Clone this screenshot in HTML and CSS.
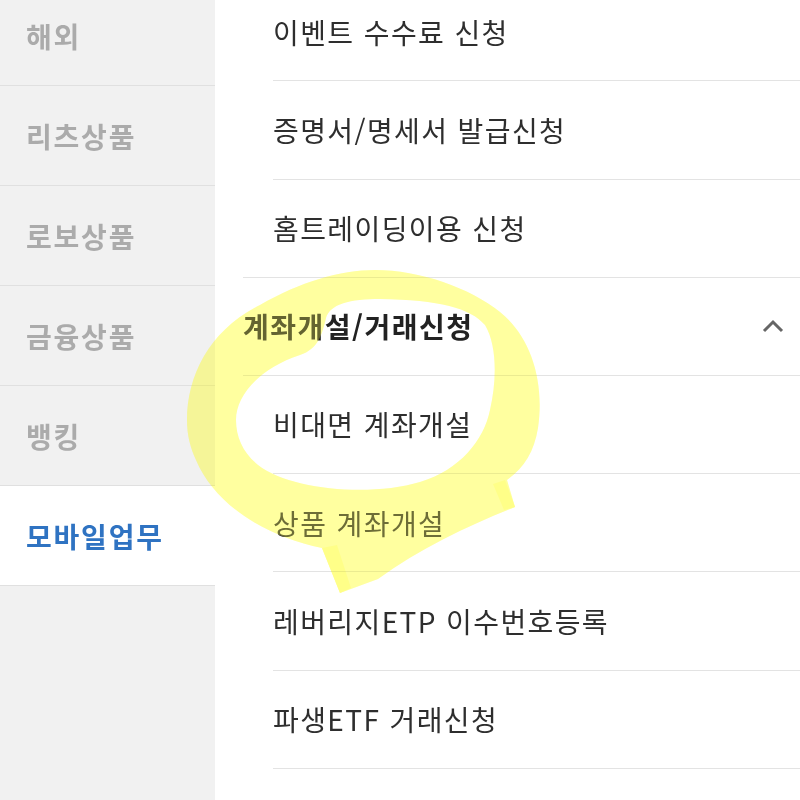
FILE: index.html
```html
<!DOCTYPE html>
<html lang="ko">
<head>
<meta charset="utf-8">
<title>모바일업무</title>
<link rel="stylesheet" href="styles.css">
</head>
<body>
<div class="page">
  <nav class="sidebar">
    <div class="side-item">해외</div>
    <div class="side-item">리츠상품</div>
    <div class="side-item">로보상품</div>
    <div class="side-item">금융상품</div>
    <div class="side-item">뱅킹</div>
    <div class="side-item active">모바일업무</div>
  </nav>
  <main class="content">
    <div class="group">
      <div class="row">이벤트 수수료 신청</div>
      <div class="row">증명서/명세서 발급신청</div>
      <div class="row">홈트레이딩이용 신청</div>
    </div>
    <div class="group open">
      <div class="head">
        <span>계좌개설/거래신청</span>
        <svg class="chev" width="24" height="16" viewBox="0 0 24 16"><polyline points="3,13 12,4 21,13" fill="none" stroke="#666" stroke-width="3"/></svg>
      </div>
      <div class="row">비대면 계좌개설</div>
      <div class="row">상품 계좌개설</div>
      <div class="row">레버리지ETP 이수번호등록</div>
      <div class="row">파생ETF 거래신청</div>
    </div>
  </main>
  <svg class="marker multiply" width="800" height="800" viewBox="0 0 800 800">
    <path class="ink-base" fill-rule="evenodd" d="M187 420 C187 375 210 330 260 305 C300 282 340 270 375 270 C420 270 470 288 500 312 C530 336 545 380 538 428 C534 452 524 468 507 480 L515 507 C470 525 420 548 378 579 L340 593 L322 548 C265 536 215 505 196 460 C190 447 187 435 187 420 Z M236 420 C236 395 260 368 300 355 C318 349 322 335 326 318 C330 304 350 299 380 299 C440 300 470 308 485 325 C497 345 497 380 490 410 C484 440 460 470 420 482 C370 497 290 490 258 465 C243 453 236 437 236 420 Z"/>
    <path class="ink-cap" d="M493 484 L505 480 L515 507 L504 510 Z M322 548 L337 545 L351 588 L340 593 Z"/>
  </svg>
  <svg class="marker tint" width="800" height="800" viewBox="0 0 800 800">
    <path class="ink-tint" fill-rule="evenodd" d="M187 420 C187 375 210 330 260 305 C300 282 340 270 375 270 C420 270 470 288 500 312 C530 336 545 380 538 428 C534 452 524 468 507 480 L515 507 C470 525 420 548 378 579 L340 593 L322 548 C265 536 215 505 196 460 C190 447 187 435 187 420 Z M236 420 C236 395 260 368 300 355 C318 349 322 335 326 318 C330 304 350 299 380 299 C440 300 470 308 485 325 C497 345 497 380 490 410 C484 440 460 470 420 482 C370 497 290 490 258 465 C243 453 236 437 236 420 Z"/>
  </svg>
</div>
</body>
</html>
```
FILE: styles.css
```css
html, body {
  margin: 0;
  padding: 0;
  background: #fff;
}
body {
  width: 800px;
  height: 800px;
  overflow: hidden;
  font-family: "Noto Sans CJK KR", "Noto Sans", sans-serif;
}
.page {
  position: relative;
  display: flex;
  width: 800px;
  height: 800px;
  overflow: hidden;
}
.sidebar {
  width: 215px;
  flex: none;
  background: #f1f1f1;
  margin-top: -14px;
}
.side-item {
  box-sizing: border-box;
  height: 100px;
  display: flex;
  align-items: center;
  padding-left: 26px;
  font-size: 28px;
  font-weight: 700;
  letter-spacing: 1.8px;
  color: #ababab;
  border-bottom: 1px solid #e0e0e0;
}
.side-item.active {
  background: #fff;
  color: #2f73c2;
}
.content {
  flex: 1;
  margin-left: 28px;
  margin-top: -17px;
}
.row {
  box-sizing: border-box;
  height: 98.4px;
  display: flex;
  align-items: center;
  margin-left: 30px;
  font-size: 28px;
  letter-spacing: 1.4px;
  color: #2e2e2e;
  border-bottom: 1px solid #e3e3e3;
}
.group > .row:last-child {
  border-bottom-color: transparent;
}
.group.open > .row:last-child {
  border-bottom-color: #e3e3e3;
}
.head {
  box-sizing: border-box;
  height: 98.4px;
  margin-top: -1px;
  display: flex;
  align-items: center;
  justify-content: space-between;
  padding-right: 17px;
  font-size: 28px;
  font-weight: 700;
  letter-spacing: 1.5px;
  color: #222;
  border-top: 1px solid #e3e3e3;
  border-bottom: 1px solid #e3e3e3;
}
.chev {
  display: block;
  margin-right: -2px;
}
.marker {
  position: absolute;
  left: 0;
  top: 0;
  pointer-events: none;
}
.marker.multiply {
  mix-blend-mode: multiply;
}
.ink-base {
  fill: #ffffb6;
}
.ink-cap {
  fill: #ffff96;
}
.ink-tint {
  fill: #ffff6a;
  opacity: 0.3;
}
```
